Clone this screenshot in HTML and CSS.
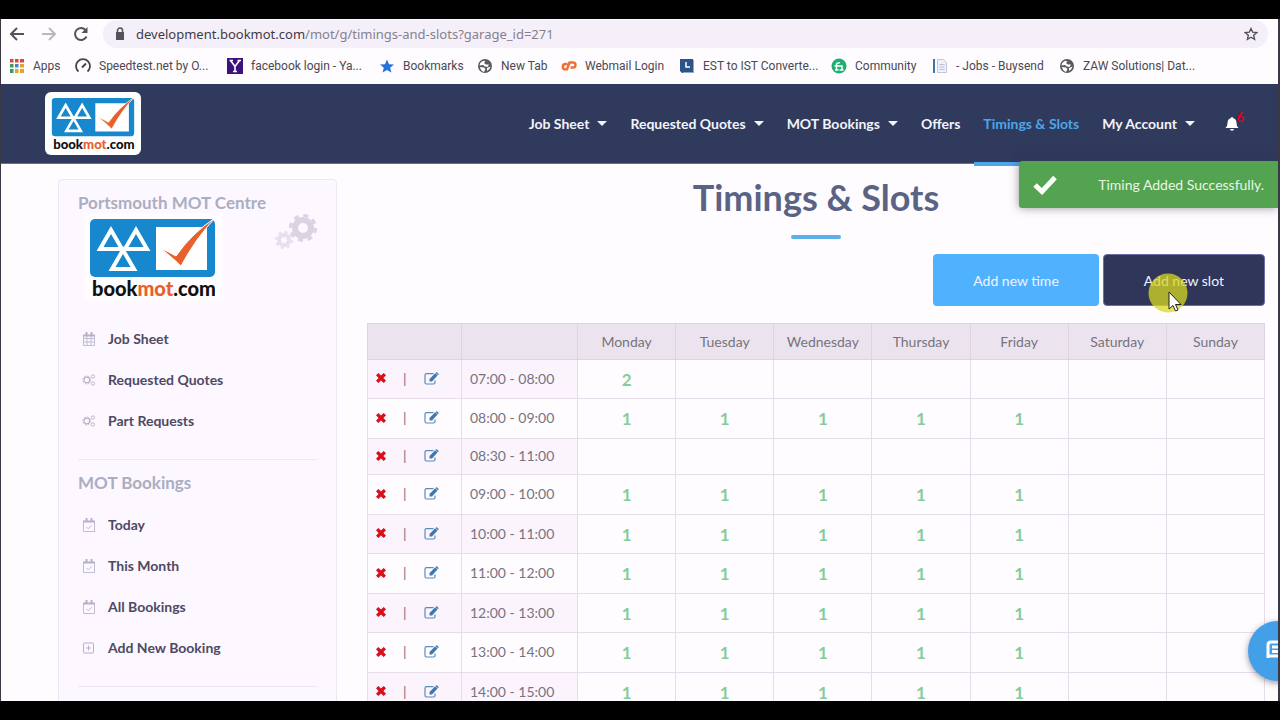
FILE: index.html
```html
<!DOCTYPE html>
<html lang="en">
<head>
    <title>Timings &amp; Slots</title>
    <meta charset="UTF-8">
    <link rel="stylesheet" href="styles.css">
</head>
<body>
    <!-- shared icons -->
    <svg class="defs" width="0" height="0">
        <symbol id="logo" viewBox="0 0 125 82">
            <rect width="125" height="58" rx="5" fill="#1788ce"/>
            <g fill="none" stroke="#fff" stroke-width="4">
                <path d="M21 11L32 30H10z"/>
                <path d="M46 11L57 30H35z"/>
                <path d="M33 31L44 50H22z"/>
            </g>
            <path fill="#fff" d="M66 8h51v43H66z"/>
            <path fill="#e8602c" stroke="#fff" stroke-width="1" d="M70 29Q79 33 86 37Q102 14 125 -1Q106 19 91 47Q82 38 70 29z"/>
            <text x="2" y="77" class="logo-text">book<tspan fill="#e8602c">mot</tspan>.com</text>
        </symbol>
        <symbol id="globe" viewBox="0 0 16 16">
            <circle cx="8" cy="8" r="7" fill="#5a5a5e"/>
            <path fill="#fff" d="M2.500 7.500Q3 4 6.500 2.800L8.500 3.500L7 5L9 6.500H12L10.500 9L8 8.500L6 7z"/>
            <path fill="#fff" d="M3 9l4 .5 1.500 1.500-1.500 3Q3.500 12.500 3 9zM10 10l3.500-1.500Q13 11.500 10 13z"/>
        </symbol>
        <symbol id="cross" viewBox="0 0 10 10">
            <path fill="#d8101c" d="M0 2.300L2.300 0 5 2.600 7.700 0 10 2.300 7.400 5 10 7.700 7.700 10 5 7.400 2.300 10 0 7.700 2.600 5z"/>
        </symbol>
        <symbol id="edit" viewBox="0 0 15 13">
            <path fill="none" stroke="#5b8bb8" stroke-width="1.200" d="M9.500 1.600H2.500Q1 1.600 1 3V10.500Q1 12 2.500 12H9.500Q11 12 11 10.500V8.500"/>
            <path fill="#3f78b0" d="M5.500 9.500V7L11.200 1.200 13.500 3.500 8 9.500zM12 .6Q12.600 0 13.200.6L14.400 1.800Q15 2.400 14.300 2.900L14 3.200 11.600.9z"/>
        </symbol>
        <symbol id="gears" viewBox="0 0 16 14">
            <g fill="none" stroke="#b6b0c8">
                <circle cx="5.500" cy="7" r="3.300" stroke-width="1.300"/>
                <circle cx="5.500" cy="7" r="4.600" stroke-width="1" stroke-dasharray="1.800 1.800"/>
                <circle cx="12.500" cy="3" r="1.900"/>
                <circle cx="12.500" cy="11" r="1.900"/>
            </g>
        </symbol>
        <symbol id="calendar" viewBox="0 0 14 14">
            <path fill="none" stroke="#c3bdd2" d="M1.500 3.500H12.500V13.500H1.500zM1.500 6.500H12.500M1.500 10H12.500M5 4V13.500M9 4V13.500"/>
            <path fill="#b6b0c8" d="M1 2.500h12v2H1zM3.500 0h2v3h-2zM8.500 0h2v3h-2z"/>
        </symbol>
        <symbol id="calendar-check" viewBox="0 0 14 14">
            <path fill="none" stroke="#c3bdd2" d="M1.500 3.500H12.500V13.500H1.500zM4.500 9L6.300 10.800 9.800 7.200"/>
            <path fill="#b6b0c8" d="M1 2.500h12v2H1zM3.500 0h2v3h-2zM8.500 0h2v3h-2z"/>
        </symbol>
        <symbol id="plus-square" viewBox="0 0 14 14">
            <rect x="1.500" y="2" width="10" height="10" rx="1" fill="none" stroke="#b6b0c8"/>
            <path stroke="#b6b0c8" d="M6.500 4.500v5M4 7h5"/>
        </symbol>
    </svg>

    <div class="window">
        <div class="toolbar">
            <button class="tool" aria-label="Back"><svg width="16" height="16" viewBox="0 0 16 16" fill="none" stroke="#55525a" stroke-width="2"><path d="M15 8H3M8 2L2 8l6 6"/></svg></button>
            <button class="tool" aria-label="Forward"><svg width="16" height="16" viewBox="0 0 16 16" fill="none" stroke="#bbb7c0" stroke-width="2"><path d="M1 8h12M8 2l6 6-6 6"/></svg></button>
            <button class="tool" aria-label="Reload"><svg width="16" height="16" viewBox="0 0 16 16" fill="none" stroke="#55525a" stroke-width="2"><path d="M13.500 10.500A6 6 0 1 1 12.500 4"/><path fill="#55525a" stroke="none" d="M14.500 1v6h-6z"/></svg></button>
            <div class="address">
                <svg width="10" height="14" viewBox="0 0 10 14"><path fill="#55525a" d="M1 5h8v8H1z"/><path fill="none" stroke="#55525a" stroke-width="1.500" d="M2.500 6V3.500a2.500 2.500 0 0 1 5 0V6"/></svg>
                <span class="url">development.bookmot.com<span class="url-path">/mot/g/timings-and-slots?garage_id=271</span></span>
                <svg width="14" height="14" viewBox="0 0 14 14"><path fill="none" stroke="#55525a" stroke-width="1.400" d="M7 1.500L8.700 5.200 12.800 5.600 9.700 8.300 10.600 12.300 7 10.200 3.400 12.300 4.300 8.300 1.200 5.600 5.300 5.200z"/></svg>
            </div>
        </div>

        <div class="bookmarks">
            <a href="#"><svg width="16" height="16" viewBox="0 0 16 16"><path fill="#d9483b" d="M1 1h4v4H1zM6 1h4v4H6zM11 1h4v4h-4z"/><path fill="#3f9c57" d="M1 6h4v4H1z"/><path fill="#4a80d8" d="M6 6h4v4H6z"/><path fill="#e0a52e" d="M11 6h4v4h-4zM6 11h4v4H6zM11 11h4v4h-4z"/><path fill="#3f9c57" d="M1 11h4v4H1z"/><path stroke="#fff" d="M5 1v14M10 1v14M1 5h14M1 10h14"/></svg>Apps</a>
            <a href="#"><svg width="16" height="16" viewBox="0 0 16 16" fill="none" stroke="#444"><path stroke-width="1.800" d="M3.500 13.500A7 7 0 1 1 12.500 13.500"/><path stroke-width="2" d="M7 9.500L11 5.500"/></svg>Speedtest.net by O...</a>
            <a href="#"><svg width="16" height="16" viewBox="0 0 16 16"><path fill="#3d1080" d="M0 0h16v16H0z"/><path fill="none" stroke="#fff" stroke-width="1.600" d="M3.500 2.500L8 8.500 12.500 2.500M8 8v5.500M2.500 2.500h3.500M10.500 2.500h3.500M6 13.500h4"/></svg>facebook login - Ya...</a>
            <a href="#"><svg width="16" height="16" viewBox="0 0 16 16"><path fill="#2672dc" d="M8 1.500L10 6.200 15 6.500 11.200 9.800 12.400 14.500 8 12 3.600 14.500 4.800 9.800 1 6.500 6 6.200z"/></svg>Bookmarks</a>
            <a href="#"><svg width="16" height="16"><use href="#globe"/></svg>New Tab</a>
            <a href="#"><svg width="16" height="16" viewBox="0 0 16 16" fill="none" stroke="#ee7133" stroke-width="2.400"><path d="M6.500 6H4.500a2.700 2.700 0 0 0 0 5.400H6L8.500 4.500H12a2.400 2.400 0 0 1 0 5H9.500"/></svg>Webmail Login</a>
            <a href="#"><svg width="16" height="16" viewBox="0 0 16 16"><path fill="#2d5488" d="M1 1h13v14H3L1 13z"/><path fill="#8fa9cc" d="M14 2h1v13H4v-1h10z"/><path fill="none" stroke="#fff" stroke-width="1.500" d="M7 4v5h4"/></svg>EST to IST Converte...</a>
            <a href="#"><svg width="16" height="16" viewBox="0 0 16 16"><circle cx="8" cy="8" r="7.500" fill="#1db071"/><path fill="none" stroke="#fff" stroke-width="1.500" d="M5.500 12V6.500Q5.500 4.500 9 4.800M3.500 8h7.500v4M8.500 12h4M4 12h3.500"/></svg>Community</a>
            <a href="#"><svg width="16" height="16" viewBox="0 0 16 16"><path fill="#3c76a8" d="M1 1h2v14H1z"/><path fill="#eef1fa" stroke="#c3c6da" d="M5.500 1.500h6l3 3v10h-9z"/><path stroke="#b9bdd6" d="M7.500 6.500h5M7.500 9h5M7.500 11.500h5"/></svg>- Jobs - Buysend</a>
            <a href="#"><svg width="16" height="16"><use href="#globe"/></svg>ZAW Solutions| Dat...</a>
        </div>

        <div class="header">
            <a class="brand" href="#" aria-label="bookmot.com"><svg width="84" height="54"><use href="#logo"/></svg></a>
            <div class="nav">
                <a class="dropdown" href="#">Job Sheet</a>
                <a class="dropdown" href="#">Requested Quotes</a>
                <a class="dropdown" href="#">MOT Bookings</a>
                <a href="#">Offers</a>
                <a class="active" href="#">Timings &amp; Slots</a>
                <a class="dropdown" href="#">My Account</a>
            </div>
            <button class="bell" aria-label="Notifications">
                <svg width="14" height="14" viewBox="0 0 14 14"><path fill="#fff" d="M7 0Q8 0 8 1Q11.500 2 11.500 6Q11.500 9.500 13.500 11H.500Q2.500 9.500 2.500 6Q2.500 2 6 1Q6 0 7 0zM5 12h4Q9 13.800 7 13.800T5 12z"/></svg>
                <span class="count">6</span>
            </button>
        </div>

        <div class="page">
            <div class="sidebar">
                <div class="sidebar-title">Portsmouth MOT Centre</div>
                <div class="garage">
                    <div class="garage-logo"><svg width="125" height="82"><use href="#logo"/></svg></div>
                    <svg class="big-gears" width="42" height="38" viewBox="0 0 42 38" fill="none">
                        <circle cx="28" cy="15" r="8" stroke="#d9d3e2" stroke-width="6"/>
                        <circle cx="28" cy="15" r="12.500" stroke="#d9d3e2" stroke-width="3" stroke-dasharray="5 4.800"/>
                        <circle cx="9" cy="27" r="5" stroke="#e6dff0" stroke-width="4"/>
                        <circle cx="9" cy="27" r="8" stroke="#e6dff0" stroke-width="2" stroke-dasharray="3.200 3.100"/>
                    </svg>
                </div>
                <ul>
                    <li><a href="#"><svg width="14" height="14"><use href="#calendar"/></svg>Job Sheet</a></li>
                    <li><a href="#"><svg width="14" height="14"><use href="#gears"/></svg>Requested Quotes</a></li>
                    <li><a href="#"><svg width="14" height="14"><use href="#gears"/></svg>Part Requests</a></li>
                </ul>
                <div class="sidebar-title">MOT Bookings</div>
                <ul>
                    <li><a href="#"><svg width="14" height="14"><use href="#calendar-check"/></svg>Today</a></li>
                    <li><a href="#"><svg width="14" height="14"><use href="#calendar-check"/></svg>This Month</a></li>
                    <li><a href="#"><svg width="14" height="14"><use href="#calendar-check"/></svg>All Bookings</a></li>
                    <li><a href="#"><svg width="14" height="14"><use href="#plus-square"/></svg>Add New Booking</a></li>
                </ul>
            </div>

            <div class="main">
                <h1>Timings &amp; Slots</h1>
                <div class="buttons">
                    <button class="add-time">Add new time</button>
                    <button class="add-slot">Add new slot
                        <svg class="pointer" width="40" height="40" viewBox="0 0 40 40"><circle cx="20" cy="20" r="19.500" fill="#d8d820" fill-opacity=".75"/><path fill="#fff" stroke="#222" d="M21 19V36L25 32.500 27.500 38 30 37 27.500 31.500H33z"/></svg>
                    </button>
                </div>

                <table>
                    <thead>
                        <tr>
                            <th class="col-actions"></th>
                            <th class="col-time"></th>
                            <th>Monday</th>
                            <th>Tuesday</th>
                            <th>Wednesday</th>
                            <th>Thursday</th>
                            <th>Friday</th>
                            <th>Saturday</th>
                            <th>Sunday</th>
                        </tr>
                    </thead>
                    <tbody>
                        <tr>
                            <td><div class="actions"><a href="#" aria-label="Delete"><svg width="10" height="10"><use href="#cross"/></svg></a><span>|</span><a href="#" aria-label="Edit"><svg width="15" height="13"><use href="#edit"/></svg></a></div></td>
                            <td>07:00 - 08:00</td>
                            <td>2</td><td></td><td></td><td></td><td></td><td></td><td></td>
                        </tr>
                        <tr>
                            <td><div class="actions"><a href="#" aria-label="Delete"><svg width="10" height="10"><use href="#cross"/></svg></a><span>|</span><a href="#" aria-label="Edit"><svg width="15" height="13"><use href="#edit"/></svg></a></div></td>
                            <td>08:00 - 09:00</td>
                            <td>1</td><td>1</td><td>1</td><td>1</td><td>1</td><td></td><td></td>
                        </tr>
                        <tr class="empty">
                            <td><div class="actions"><a href="#" aria-label="Delete"><svg width="10" height="10"><use href="#cross"/></svg></a><span>|</span><a href="#" aria-label="Edit"><svg width="15" height="13"><use href="#edit"/></svg></a></div></td>
                            <td>08:30 - 11:00</td>
                            <td></td><td></td><td></td><td></td><td></td><td></td><td></td>
                        </tr>
                        <tr>
                            <td><div class="actions"><a href="#" aria-label="Delete"><svg width="10" height="10"><use href="#cross"/></svg></a><span>|</span><a href="#" aria-label="Edit"><svg width="15" height="13"><use href="#edit"/></svg></a></div></td>
                            <td>09:00 - 10:00</td>
                            <td>1</td><td>1</td><td>1</td><td>1</td><td>1</td><td></td><td></td>
                        </tr>
                        <tr>
                            <td><div class="actions"><a href="#" aria-label="Delete"><svg width="10" height="10"><use href="#cross"/></svg></a><span>|</span><a href="#" aria-label="Edit"><svg width="15" height="13"><use href="#edit"/></svg></a></div></td>
                            <td>10:00 - 11:00</td>
                            <td>1</td><td>1</td><td>1</td><td>1</td><td>1</td><td></td><td></td>
                        </tr>
                        <tr>
                            <td><div class="actions"><a href="#" aria-label="Delete"><svg width="10" height="10"><use href="#cross"/></svg></a><span>|</span><a href="#" aria-label="Edit"><svg width="15" height="13"><use href="#edit"/></svg></a></div></td>
                            <td>11:00 - 12:00</td>
                            <td>1</td><td>1</td><td>1</td><td>1</td><td>1</td><td></td><td></td>
                        </tr>
                        <tr>
                            <td><div class="actions"><a href="#" aria-label="Delete"><svg width="10" height="10"><use href="#cross"/></svg></a><span>|</span><a href="#" aria-label="Edit"><svg width="15" height="13"><use href="#edit"/></svg></a></div></td>
                            <td>12:00 - 13:00</td>
                            <td>1</td><td>1</td><td>1</td><td>1</td><td>1</td><td></td><td></td>
                        </tr>
                        <tr>
                            <td><div class="actions"><a href="#" aria-label="Delete"><svg width="10" height="10"><use href="#cross"/></svg></a><span>|</span><a href="#" aria-label="Edit"><svg width="15" height="13"><use href="#edit"/></svg></a></div></td>
                            <td>13:00 - 14:00</td>
                            <td>1</td><td>1</td><td>1</td><td>1</td><td>1</td><td></td><td></td>
                        </tr>
                        <tr>
                            <td><div class="actions"><a href="#" aria-label="Delete"><svg width="10" height="10"><use href="#cross"/></svg></a><span>|</span><a href="#" aria-label="Edit"><svg width="15" height="13"><use href="#edit"/></svg></a></div></td>
                            <td>14:00 - 15:00</td>
                            <td>1</td><td>1</td><td>1</td><td>1</td><td>1</td><td></td><td></td>
                        </tr>
                    </tbody>
                </table>
            </div>
        </div>

        <div class="toast">
            <svg width="24" height="20" viewBox="0 0 24 20"><path fill="none" stroke="#fff" stroke-width="5" d="M2 10l7 6.500L22 2.500"/></svg>
            <span>Timing Added Successfully.</span>
        </div>

        <button class="chat" aria-label="Chat">
            <svg width="24" height="22" viewBox="0 0 24 22" fill="none" stroke="#fff" stroke-width="3"><path d="M2 18V5Q2 2 5 2H19Q22 2 22 5V13Q22 16 19 16H2M6 7h12M6 11.500h12"/></svg>
        </button>
    </div>
</body>
</html>
```
FILE: styles.css
```css
* {
    box-sizing: border-box;
}
body {
    margin: 0;
    height: 100vh;
    padding: 19px 0;
    background: #000;
    font-family: Lato, "Open Sans", sans-serif;
    font-size: 14px;
    color: #4d4a63;
}
a {
    color: inherit;
    text-decoration: none;
}
button {
    font: inherit;
    border: 0;
    padding: 0;
    background: none;
}
svg {
    display: block;
    flex: none;
}
ul {
    list-style: none;
    margin: 0;
    padding: 0;
}
.defs {
    position: absolute;
}
.logo-text {
    font: 900 20px Lato, sans-serif;
    fill: #111;
}
.window {
    position: relative;
    height: 100%;
    overflow: hidden;
    background: #fefcff;
    border: solid #3a3844;
    border-width: 0 2px 0 1px;
}

/* browser bars */
.toolbar {
    display: flex;
    align-items: center;
    gap: 16px;
    height: 30px;
    padding: 0 10px 0 8px;
}
.address {
    display: flex;
    align-items: center;
    flex: 1;
    gap: 11px;
    height: 28px;
    margin-left: -2px;
    padding: 0 10px 0 12px;
    border-radius: 14px;
    background: #f5effa;
}
.url {
    flex: 1;
    font-family: "Noto Sans", sans-serif;
    font-size: 13px;
    color: #3e3b45;
}
.url-path {
    color: #85818c;
}
.bookmarks {
    display: grid;
    grid-template-columns: 66px 152px 152px 98px 84px 118px 152px 101px 127px auto;
    align-items: center;
    height: 35px;
    padding: 0 0 2px 8px;
    font-family: Roboto, sans-serif;
    font-size: 12px;
    color: #4b4852;
}
.bookmarks a {
    display: flex;
    align-items: center;
    gap: 8px;
    white-space: nowrap;
}

/* site header */
.header {
    display: flex;
    align-items: center;
    height: 80px;
    padding: 0 39px 0 44px;
    background: #2f3a5c;
    border-bottom: 1px solid #6a6f8a;
}
.brand {
    padding: 6px 6px 3px;
    border-radius: 6px;
    background: #fff;
}
.nav {
    display: flex;
    gap: 5px;
    height: 100%;
    margin-left: auto;
    font-weight: bold;
    color: #f4f2fa;
}
.nav a {
    position: relative;
    display: flex;
    align-items: center;
    padding: 0 9px;
}
.nav .dropdown::after {
    content: "";
    margin-left: 8px;
    border: solid transparent;
    border-width: 5px 5px 0;
    border-top-color: #f4f2fa;
}
.nav .active {
    color: #4ba6ea;
}
.nav .active::after {
    content: "";
    position: absolute;
    left: 0;
    right: 0;
    bottom: -3px;
    height: 4px;
    background: #4ba6ea;
}
.bell {
    position: relative;
    margin-left: 21px;
}
.count {
    position: absolute;
    top: -8px;
    right: -5px;
    font-size: 13px;
    font-weight: bold;
    color: #d4061c;
}

/* page */
.page {
    display: flex;
    align-items: flex-start;
    gap: 30px;
    padding: 15px 13px 0 57px;
}
.sidebar {
    width: 279px;
    height: 620px;
    flex: none;
    padding: 13px 19px;
    border: 1px solid #efe6f3;
    border-radius: 4px;
    background: #fdf7ff;
}
.sidebar-title {
    line-height: 20px;
    font-size: 17px;
    font-weight: bold;
    color: #a9aec2;
}
.garage {
    display: flex;
    justify-content: space-between;
    height: 105px;
}
.garage-logo {
    align-self: flex-start;
    margin-left: 6px;
    padding: 6px 8px 0 6px;
    background: #fefcff;
}
.sidebar ul {
    margin-bottom: 13px;
    padding-bottom: 18px;
    border-bottom: 1px solid #efe7f3;
}
.sidebar-title + ul {
    margin-top: 11px;
}
.sidebar li a {
    display: flex;
    align-items: center;
    gap: 12px;
    height: 41px;
    padding-left: 4px;
    font-weight: bold;
}
.main {
    flex: 1;
}
h1 {
    margin: 0;
    line-height: 36px;
    text-align: center;
    font-size: 36px;
    color: #5b6385;
}
h1::after {
    content: "";
    display: block;
    width: 50px;
    height: 4px;
    margin: 20px auto 15px;
    border-radius: 2px;
    background: #5bb0e8;
}
.buttons {
    display: flex;
    justify-content: flex-end;
    gap: 4px;
    margin-bottom: 17px;
}
.buttons button {
    position: relative;
    height: 52px;
    padding: 0 40px;
    border-radius: 4px;
    color: #f0f4ff;
}
.add-time {
    background: #50b2ff;
}
.buttons .add-slot {
    background: #2f3659;
    border: 1px solid #6b70a8;
}
.pointer {
    position: absolute;
    left: 44px;
    top: 18px;
}
table {
    width: 100%;
    table-layout: fixed;
    border-collapse: collapse;
    color: #77737f;
}
th, td {
    padding: 0;
    border: 1px solid #e6dcea;
}
th {
    height: 36px;
    font-weight: normal;
    background: #ebe4ee;
    border-color: #ddd3e1;
}
.col-actions {
    width: 94px;
}
.col-time {
    width: 116px;
}
td {
    height: 40px;
    text-align: center;
    font-size: 17px;
    font-weight: bold;
    color: #84cd9a;
}
tr:nth-child(odd) td {
    height: 39px;
}
.empty:nth-child(odd) td {
    height: 36px;
}
td:nth-child(-n+2) {
    padding: 0 8px 2px;
    text-align: left;
    font-size: 14px;
    font-weight: normal;
    color: #77737f;
}
tr:nth-child(odd) td:nth-child(-n+2) {
    background: #fbf4fd;
}
.actions {
    display: flex;
    align-items: center;
    gap: 17px;
}

/* over the page */
.toast {
    position: absolute;
    top: 142px;
    right: 0;
    display: flex;
    align-items: center;
    justify-content: space-between;
    width: 259px;
    height: 47px;
    padding: 0 14px;
    border-radius: 3px 0 0 3px;
    background: #54a350;
    color: #e8f6e6;
    box-shadow: 0 0 10px rgba(60, 50, 70, 0.5);
}
.chat {
    position: absolute;
    right: -30px;
    bottom: 20px;
    display: flex;
    align-items: center;
    justify-content: center;
    width: 60px;
    height: 60px;
    border-radius: 50%;
    background: #43a0e8;
    box-shadow: 0 2px 6px rgba(60, 50, 70, 0.5);
}
```
